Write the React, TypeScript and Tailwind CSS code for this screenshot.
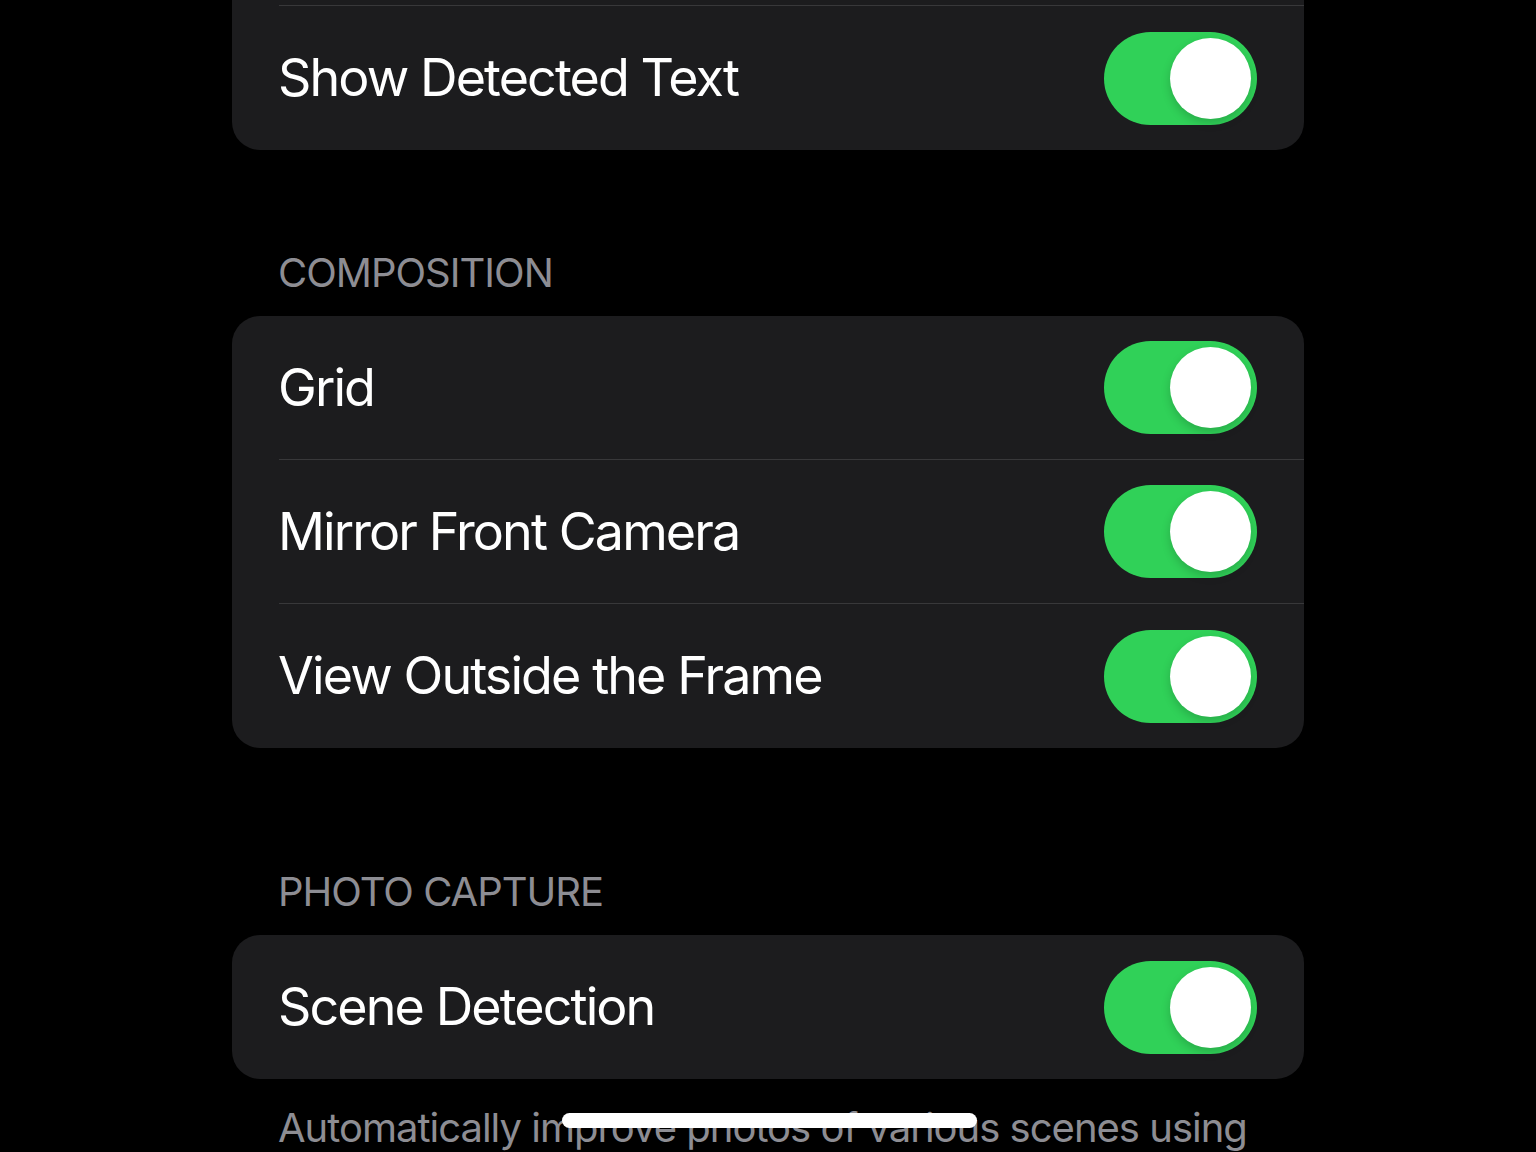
const FONT = { fontFamily: "Inter, 'Noto Sans', sans-serif" };

type Row = { label: string; on: boolean };

const COMPOSITION: Row[] = [
  { label: "Grid", on: true },
  { label: "Mirror Front Camera", on: true },
  { label: "View Outside the Frame", on: true },
];

function Toggle({ on }: { on: boolean }) {
  return (
    <div
      className={`flex h-[93px] w-[153px] flex-none items-center rounded-full p-[6px] ${
        on ? "justify-end bg-[#30d158]" : "justify-start bg-[#39393d]"
      }`}
    >
      <div className="h-[81px] w-[81px] rounded-full bg-white shadow-[0_4px_10px_rgba(0,0,0,0.18)]" />
    </div>
  );
}

function SettingRow({ row, last }: { row: Row; last?: boolean }) {
  return (
    <div
      className={`ml-[47px] flex h-[144px] items-center justify-between pr-[47px] ${
        last ? "" : "border-b border-[#38383a]"
      }`}
    >
      <span className="-ml-[1px] text-[52px] leading-none tracking-[-1.9px] text-white">{row.label}</span>
      <Toggle on={row.on} />
    </div>
  );
}

function SectionHeader({ children }: { children: string }) {
  return (
    <p className="mb-[19px] pl-[46px] text-[40px] leading-[48px] tracking-[-1px] text-[#8d8d93]">
      {children}
    </p>
  );
}

export default function App() {
  return (
    <div className="relative h-[1152px] overflow-hidden bg-black" style={FONT}>
      <div className="mx-auto w-[1072px]">
        {/* card scrolled partly off the top */}
        <div className="rounded-b-[28px] bg-[#1c1c1e]">
          <div className="ml-[47px] h-[6px] border-b border-[#38383a]" />
          <SettingRow row={{ label: "Show Detected Text", on: true }} last />
        </div>

        <div className="mt-[99px]">
          <SectionHeader>COMPOSITION</SectionHeader>
          <div className="overflow-hidden rounded-[28px] bg-[#1c1c1e]">
            {COMPOSITION.map((r, i) => (
              <SettingRow key={r.label} row={r} last={i === COMPOSITION.length - 1} />
            ))}
          </div>
        </div>

        <div className="mt-[120px]">
          <SectionHeader>PHOTO CAPTURE</SectionHeader>
          <div className="overflow-hidden rounded-[28px] bg-[#1c1c1e]">
            <SettingRow row={{ label: "Scene Detection", on: true }} last />
          </div>
          <p className="mt-[25px] pl-[46px] pr-[40px] text-[40px] leading-[48px] tracking-[-1px] text-[#8d8d93]">
            Automatically improve photos of various scenes using intelligent image recognition.
          </p>
        </div>
      </div>

      {/* home indicator */}
      <div className="absolute bottom-[24px] left-[562px] h-[15px] w-[415px] rounded-full bg-white" />
    </div>
  );
}
